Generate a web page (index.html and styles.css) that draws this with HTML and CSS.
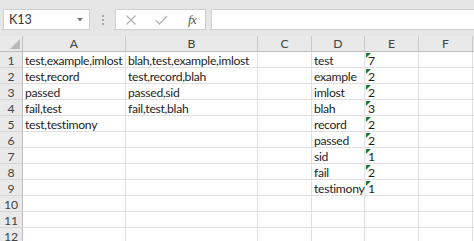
FILE: index.html
```html
<!DOCTYPE html>
<html>
<head>
<meta charset="utf-8">
<link rel="stylesheet" href="styles.css">
</head>
<body>
<div class="app">
  <div class="toolbar">
    <div class="namebox">
      <span class="nb-text">K13</span>
      <svg class="nb-arrow" width="6" height="4" viewBox="0 0 6 4"><path d="M0 0H6L3 3.5Z" fill="#7a7a7a"/></svg>
    </div>
    <div class="dots"><i></i><i></i><i></i></div>
    <div class="fbuttons">
      <svg class="ico" width="12" height="12" viewBox="0 0 12 12"><path d="M1.5 1.5L10.5 10.5M10.5 1.5L1.5 10.5" stroke="#b4b4b4" stroke-width="1.3" fill="none"/></svg>
      <svg class="ico" width="13" height="12" viewBox="0 0 13 12"><path d="M1 6.5L4.5 10L12 2" stroke="#b4b4b4" stroke-width="1.3" fill="none"/></svg>
      <span class="fx">fx</span>
    </div>
    <div class="finput"></div>
  </div>
  <div class="grid">
    <div class="corner"><svg width="10" height="10" viewBox="0 0 10 10"><path d="M10 0V10H0Z" fill="#b9b9b9"/></svg></div>
    <div class="ch">A</div><div class="ch">B</div><div class="ch">C</div><div class="ch">D</div><div class="ch">E</div><div class="ch">F</div><div class="ch last"></div>

    <div class="rh">1</div><div class="c">test,example,imlost</div><div class="c">blah,test,example,imlost</div><div class="c"></div><div class="c">test</div><div class="c n">7</div><div class="c"></div><div class="c last"></div>
    <div class="rh">2</div><div class="c">test,record</div><div class="c">test,record,blah</div><div class="c"></div><div class="c">example</div><div class="c n">2</div><div class="c"></div><div class="c last"></div>
    <div class="rh">3</div><div class="c">passed</div><div class="c">passed,sid</div><div class="c"></div><div class="c">imlost</div><div class="c n">2</div><div class="c"></div><div class="c last"></div>
    <div class="rh">4</div><div class="c">fail,test</div><div class="c">fail,test,blah</div><div class="c"></div><div class="c">blah</div><div class="c n">3</div><div class="c"></div><div class="c last"></div>
    <div class="rh">5</div><div class="c">test,testimony</div><div class="c"></div><div class="c"></div><div class="c">record</div><div class="c n">2</div><div class="c"></div><div class="c last"></div>
    <div class="rh">6</div><div class="c"></div><div class="c"></div><div class="c"></div><div class="c">passed</div><div class="c n">2</div><div class="c"></div><div class="c last"></div>
    <div class="rh">7</div><div class="c"></div><div class="c"></div><div class="c"></div><div class="c">sid</div><div class="c n">1</div><div class="c"></div><div class="c last"></div>
    <div class="rh">8</div><div class="c"></div><div class="c"></div><div class="c"></div><div class="c">fail</div><div class="c n">2</div><div class="c"></div><div class="c last"></div>
    <div class="rh">9</div><div class="c"></div><div class="c"></div><div class="c"></div><div class="c">testimony</div><div class="c n">1</div><div class="c"></div><div class="c last"></div>
    <div class="rh">10</div><div class="c"></div><div class="c"></div><div class="c"></div><div class="c"></div><div class="c"></div><div class="c"></div><div class="c last"></div>
    <div class="rh">11</div><div class="c"></div><div class="c"></div><div class="c"></div><div class="c"></div><div class="c"></div><div class="c"></div><div class="c last"></div>
    <div class="rh">12</div><div class="c"></div><div class="c"></div><div class="c"></div><div class="c"></div><div class="c"></div><div class="c"></div><div class="c last"></div>
  </div>
</div>
</body>
</html>
```
FILE: styles.css
```css
* { box-sizing: border-box; }
html, body { margin: 0; padding: 0; }
body {
  width: 474px;
  height: 241px;
  overflow: hidden;
  background: #ffffff;
  font-family: Lato, "Liberation Sans", sans-serif;
  color: #222;
}
.app { width: 474px; height: 241px; overflow: hidden; }

.toolbar {
  height: 36px;
  background: #e6e6e6;
  display: flex;
  align-items: flex-start;
  padding: 9px 0 0 3px;
}
.namebox {
  width: 87px;
  height: 21px;
  background: #fff;
  border: 1px solid #cfcfcf;
  display: flex;
  align-items: center;
  justify-content: space-between;
  padding: 0 6px 0 5px;
  font-size: 12.5px;
  color: #333;
}
.nb-arrow { margin-top: 1px; }
.dots {
  width: 25px;
  height: 21px;
  display: flex;
  flex-direction: column;
  align-items: center;
  justify-content: center;
  gap: 2px;
}
.dots i { width: 2px; height: 2px; background: #a8a8a8; display: block; }
.fbuttons {
  width: 91px;
  height: 21px;
  background: #fff;
  border: 1px solid #cfcfcf;
  display: flex;
  align-items: center;
  padding: 0 0 0 9px;
  gap: 18px;
}
.fx {
  font-family: "Liberation Serif", serif;
  font-style: italic;
  font-size: 13px;
  color: #555;
  margin-left: 2px;
  letter-spacing: -0.5px;
}
.finput {
  flex: 1;
  height: 21px;
  margin-left: 5px;
  background: #fff;
  border: 1px solid #cfcfcf;
  border-right: none;
}

.grid {
  display: grid;
  grid-template-columns: 23px 103px 132px 54px 53px 54px 54px 1fr;
  grid-auto-rows: 16px;
  font-size: 12.2px;
}
.corner, .ch, .rh { background: #e9e9e9; color: #444; }
.corner {
  border-right: 1px solid #bdbdbd;
  border-bottom: 1px solid #bdbdbd;
  display: flex;
  align-items: flex-end;
  justify-content: flex-end;
  padding: 0 2px 2px 0;
}
.ch {
  border-right: 1px solid #cacaca;
  border-bottom: 1px solid #bdbdbd;
  text-align: center;
  line-height: 15px;
}
.rh {
  border-right: 1px solid #bdbdbd;
  border-bottom: 1px solid #d6d6d6;
  text-align: center;
  line-height: 16px;
  padding-top: 1px;
}
.c {
  border-right: 1px solid #e0e0e0;
  border-bottom: 1px solid #e0e0e0;
  padding: 1px 0 0 2px;
  line-height: 16px;
  white-space: nowrap;
  letter-spacing: -0.3px;
  overflow: visible;
  position: relative;
  color: #1e1e1e;
}
.c.n { padding-left: 3px; }
.c.n::before {
  content: "";
  position: absolute;
  left: 1px;
  top: 1px;
  border-top: 5px solid #1f7a3c;
  border-right: 5px solid transparent;
}
.last { border-right: none; }
```
